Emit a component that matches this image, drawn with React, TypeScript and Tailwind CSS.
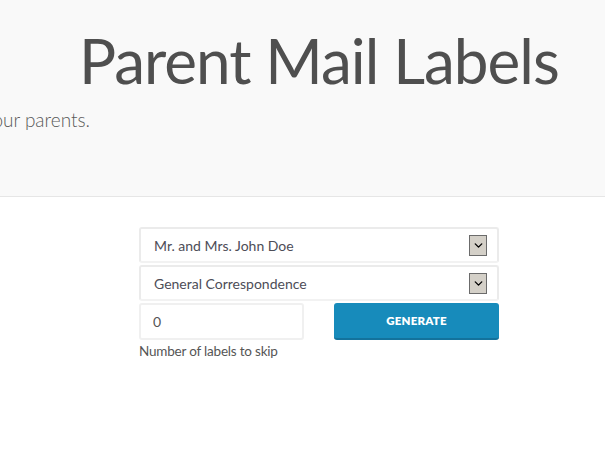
import { ChevronDown } from "lucide-react";

function SelectBox({ value }: { value: string }) {
  return (
    <div className="flex h-[36px] w-[360px] items-center justify-between rounded-[3px] border-2 border-[#ebebeb] border-b-[#f2f2f2] bg-white pl-[13px] pr-[10px]">
      <span className="text-[14px] text-[#4d4d57]">{value}</span>
      <span className="flex h-[21px] w-[18px] items-center justify-center border border-[#6b6b6b] bg-[#d4d0c8]">
        <ChevronDown className="h-[13px] w-[13px] text-black" strokeWidth={2.5} />
      </span>
    </div>
  );
}

export default function App() {
  return (
    <div className="min-h-[461px] w-full bg-white font-['Lato','Liberation_Sans',sans-serif] text-[#555]">
      <header className="h-[197px] overflow-hidden border-b border-[#e6e6e6] bg-[#f9f9f9] pt-[21px]">
        <h1 className="ml-[79px] whitespace-nowrap text-[62px] font-normal leading-[78px] tracking-[-1px] text-[#4f4f4f]">
          Parent Mail Labels
        </h1>
        <div className="mt-[7px] flex w-[90px] justify-end">
          <p className="shrink-0 whitespace-nowrap text-[19px] font-light text-[#5a5a5a]">
            Print mailing labels for your parents.
          </p>
        </div>
      </header>

      <main className="ml-[139px] mt-[30px] flex w-[360px] flex-col gap-[2px]">
        <SelectBox value="Mr. and Mrs. John Doe" />
        <SelectBox value="General Correspondence" />
        <div className="flex items-start justify-between">
          <div className="flex flex-col">
            <input
              defaultValue="0"
              className="h-[37px] w-[165px] rounded-[3px] border-2 border-[#f0f0f0] bg-white pl-[12px] text-[14px] text-[#555] outline-none"
            />
            <label className="mt-[1px] text-[13.5px] tracking-[-0.2px] text-[#555]">Number of labels to skip</label>
          </div>
          <button className="h-[37px] w-[165px] rounded-[3px] border-b-2 border-[#13729c] bg-[#178bbb] text-[11.5px] font-extrabold tracking-[0.2px] text-white">
            GENERATE
          </button>
        </div>
      </main>
    </div>
  );
}
